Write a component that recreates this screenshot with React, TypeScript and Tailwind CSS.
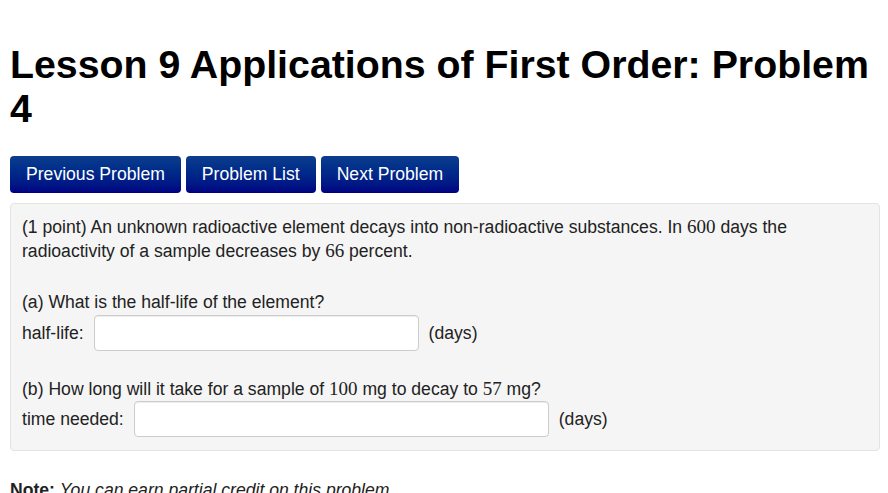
import React from 'react';

const NavButton = ({ label }: { label: string }) => (
  <button className="h-[37px] rounded-[4px] bg-gradient-to-b from-[#0e3d8e] to-[#000082] px-[16px] text-[17.6px] text-white">
    {label}
  </button>
);

// MathJax-style number
const M = ({ children }: { children: React.ReactNode }) => (
  <span className="font-['Liberation_Serif',serif] text-[19px]">{children}</span>
);

const AnswerRow = ({ label, width }: { label: string; width: string }) => (
  <div className="flex items-center">
    <span>{label}</span>
    <input
      type="text"
      className={`ml-[10px] h-[36px] ${width} rounded-[4px] border border-[#cccccc] bg-white px-2 shadow-[inset_0_1px_1px_rgba(0,0,0,0.075)] outline-none`}
    />
    <span className="ml-[10px]">(days)</span>
  </div>
);

const App = () => {
  return (
    <div className="min-h-screen bg-white px-[10px] font-['Liberation_Sans',Arial,sans-serif] text-[17.6px] text-[#222]">
      <h1 className="pt-[43px] text-[39.3px] font-bold leading-[43.5px] text-black">
        Lesson 9 Applications of First Order: Problem 4
      </h1>

      <div className="mt-[26px] flex gap-[5px]">
        <NavButton label="Previous Problem" />
        <NavButton label="Problem List" />
        <NavButton label="Next Problem" />
      </div>

      <div className="mt-[10px] w-[870px] rounded-[4px] border border-[#e3e3e3] bg-[#f5f5f5] px-[11px] pb-[13px] pt-[11px] leading-[24px]">
        <p>
          (1 point) An unknown radioactive element decays into non-radioactive substances. In <M>600</M> days the
          radioactivity of a sample decreases by <M>66</M> percent.
        </p>

        <div className="mt-[27px]">(a) What is the half-life of the element?</div>
        <div className="mt-[1px]">
          <AnswerRow label="half-life:" width="w-[325px]" />
        </div>

        <div className="mt-[26px]">
          (b) How long will it take for a sample of <M>100</M> mg to decay to <M>57</M> mg?
        </div>
        <AnswerRow label="time needed:" width="w-[415px]" />
      </div>

      <p className="mt-[26px]">
        <b>Note:</b> <i>You can earn partial credit on this problem.</i>
      </p>
    </div>
  );
};

export default App;
